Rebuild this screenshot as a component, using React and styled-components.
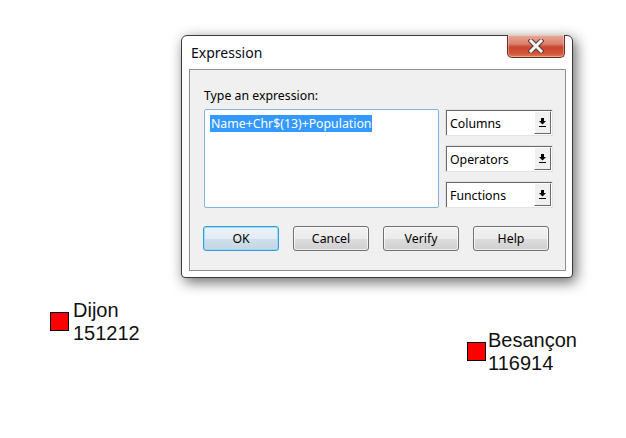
import styled, { createGlobalStyle } from "styled-components"

const GlobalStyle = createGlobalStyle`
  html, body {
    margin: 0;
    padding: 0;
    background: #ffffff;
  }
  #root {
    position: relative;
    width: 626px;
    height: 438px;
    overflow: hidden;
  }
`

const Canvas = styled.div`
  position: relative;
  width: 626px;
  height: 438px;
  background: #ffffff;
`

// map labels
const Pin = styled.div`
  position: absolute;
  left: ${(p) => p.x}px;
  top: ${(p) => p.y}px;
  display: flex;
  align-items: flex-start;
  gap: ${(p) => p.gap}px;
`

const Marker = styled.div`
  width: 17px;
  height: 17px;
  margin-top: ${(p) => p.offset}px;
  background: #ff0000;
  border: 1px solid #000000;
`

const PinText = styled.div`
  font-family: "Liberation Sans", Arial, sans-serif;
  font-size: 20px;
  line-height: 23px;
  color: #111111;
`

// dialog window
const Window = styled.div`
  position: absolute;
  left: 181px;
  top: 35px;
  width: 392px;
  height: 243px;
  box-sizing: border-box;
  display: flex;
  flex-direction: column;
  background: #ffffff;
  border: 1px solid #3a3a3a;
  border-radius: 6px 6px 4px 4px;
  box-shadow: 3px 4px 14px rgba(0, 0, 0, 0.6);
  font-family: "Noto Sans", "Open Sans", sans-serif;
`

const TitleBar = styled.div`
  position: relative;
  height: 33px;
  display: flex;
  align-items: center;
  padding-left: 9px;
  box-sizing: border-box;
`

const Title = styled.span`
  font-size: 14px;
  color: #0a0a20;
`

const CloseButton = styled.div`
  position: absolute;
  top: -1px;
  right: 7px;
  width: 58px;
  height: 23px;
  box-sizing: border-box;
  display: flex;
  align-items: center;
  justify-content: center;
  border: 1px solid #6d2a1c;
  border-top: none;
  border-radius: 0 0 5px 5px;
  background: linear-gradient(
    to bottom,
    #e9a99a 0%,
    #d98270 40%,
    #c8462c 55%,
    #d2573a 85%,
    #e17b5f 100%
  );
  box-shadow: inset 0 0 0 1px rgba(255, 255, 255, 0.35);
`

const Client = styled.div`
  flex: 1;
  margin: 0 6px 6px 7px;
  border: 1px solid #8e8f8f;
  background: #f0f0f0;
  display: flex;
  flex-direction: column;
  padding: 18px 12px 0 13px;
`

const Label = styled.div`
  font-size: 12.3px;
  line-height: 15px;
  color: #000000;
  margin-left: 1px;
`

const Fields = styled.div`
  display: flex;
  gap: 6px;
  margin-top: 6px;
  margin-left: 1px;
`

const ExpressionBox = styled.div`
  width: 235px;
  height: 99px;
  box-sizing: border-box;
  background: #ffffff;
  border: 1px solid #84b2e0;
  border-radius: 2px;
  padding: 1px 0 0 5px;
`

const Selected = styled.span`
  display: inline-block;
  background: #3399ff;
  color: #ffffff;
  font-size: 12.3px;
  line-height: 17px;
  padding: 0 1px;
`

const ComboStack = styled.div`
  display: flex;
  flex-direction: column;
  gap: 9px;
`

const Combo = styled.div`
  width: 108px;
  height: 27px;
  box-sizing: border-box;
  display: flex;
  align-items: stretch;
  background: #ffffff;
  border-top: 1px solid #a0a0a0;
  border-left: 1px solid #a0a0a0;
  border-right: 1px solid #ffffff;
  border-bottom: 1px solid #ffffff;
  box-shadow: inset 1px 1px 0 #696969;
  outline: 1px solid #e3e3e3;
  outline-offset: -1px;
`

const ComboText = styled.div`
  flex: 1;
  display: flex;
  align-items: center;
  padding-left: 4px;
  padding-top: 1px;
  font-size: 12.3px;
  color: #000000;
`

const ComboButton = styled.div`
  width: 17px;
  margin: 1px 1px 1px 0;
  box-sizing: border-box;
  display: flex;
  align-items: center;
  justify-content: center;
  background: #f0f0f0;
  border-left: 1px solid #ffffff;
  border-top: 1px solid #ffffff;
  border-right: 1px solid #696969;
  border-bottom: 1px solid #696969;
`

const ButtonRow = styled.div`
  display: flex;
  justify-content: space-between;
  margin-top: 18px;
  margin-right: 4px;
`

const Button = styled.div`
  width: 76px;
  height: 25px;
  box-sizing: border-box;
  display: flex;
  align-items: center;
  justify-content: center;
  font-size: 12.3px;
  color: #000000;
  border-radius: 3px;
  border: 1px solid ${(p) => (p.$default ? "#3c9ad8" : "#707070")};
  background: ${(p) =>
    p.$default
      ? "linear-gradient(to bottom, #eaf3f9 0%, #e1ecf4 50%, #cfdfea 51%, #c4d6e3 100%)"
      : "linear-gradient(to bottom, #f2f2f2 0%, #ebebeb 50%, #dddddd 51%, #cfcfcf 100%)"};
  box-shadow: inset 0 0 0 1px
    ${(p) => (p.$default ? "rgba(140, 220, 255, 0.9)" : "rgba(255, 255, 255, 0.7)")};
`

const CloseGlyph = () => (
  <svg width="16" height="14" viewBox="0 0 16 14">
    <path
      d="M3 2 L13 12 M13 2 L3 12"
      stroke="#5a3a34"
      strokeWidth="5"
      strokeLinecap="square"
      fill="none"
    />
    <path
      d="M3 2 L13 12 M13 2 L3 12"
      stroke="#f4f4f4"
      strokeWidth="3"
      strokeLinecap="square"
      fill="none"
    />
  </svg>
)

const DropArrow = () => (
  <svg width="7" height="9" viewBox="0 0 7 9">
    <rect x="2" y="0" width="3" height="3" fill="#000" />
    <path d="M0 3 H7 L3.5 6.5 Z" fill="#000" />
    <rect x="0" y="8" width="7" height="1" fill="#000" />
  </svg>
)

const combos = ["Columns", "Operators", "Functions"]

const App = () => {
  return (
    <Canvas>
      <GlobalStyle />
      <Window>
        <TitleBar>
          <Title>Expression</Title>
          <CloseButton>
            <CloseGlyph />
          </CloseButton>
        </TitleBar>
        <Client>
          <Label>Type an expression:</Label>
          <Fields>
            <ExpressionBox>
              <Selected>Name+Chr$(13)+Population</Selected>
            </ExpressionBox>
            <ComboStack>
              {combos.map((name) => (
                <Combo key={name}>
                  <ComboText>{name}</ComboText>
                  <ComboButton>
                    <DropArrow />
                  </ComboButton>
                </Combo>
              ))}
            </ComboStack>
          </Fields>
          <ButtonRow>
            <Button $default>OK</Button>
            <Button>Cancel</Button>
            <Button>Verify</Button>
            <Button>Help</Button>
          </ButtonRow>
        </Client>
      </Window>

      <Pin x={50} y={299} gap={4}>
        <Marker offset={13} />
        <PinText>
          Dijon
          <br />
          151212
        </PinText>
      </Pin>
      <Pin x={467} y={329} gap={2}>
        <Marker offset={13} />
        <PinText>
          Besançon
          <br />
          116914
        </PinText>
      </Pin>
    </Canvas>
  )
}

export default App
